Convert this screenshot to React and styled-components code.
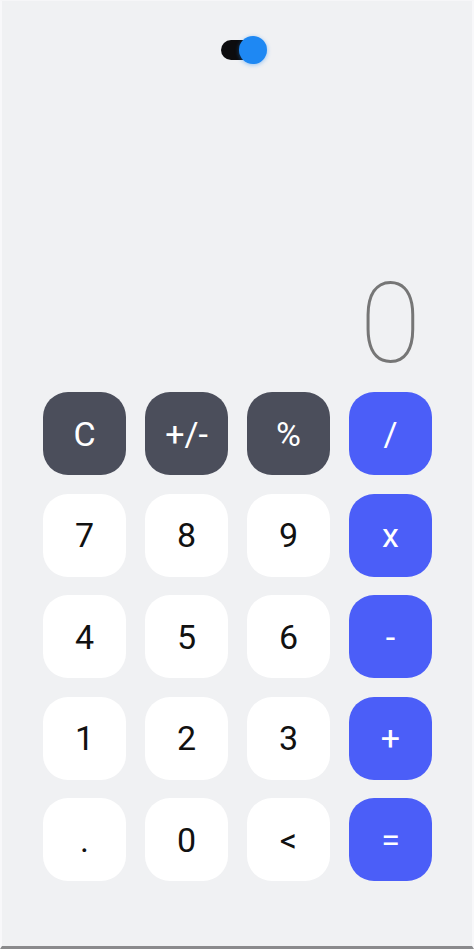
import React, { useState } from "react";
import styled, { createGlobalStyle } from "styled-components";

const GlobalStyle = createGlobalStyle`
  html, body {
    margin: 0;
    padding: 0;
    background: #f0f1f3;
    font-family: Roboto, "Liberation Sans", sans-serif;
  }
`;

const Screen = styled.div`
  box-sizing: border-box;
  width: 474px;
  height: 949px;
  background: #f0f1f3;
  border-left: 2px solid #f8f8fa;
  border-right: 2px solid #f8f8fa;
  border-top: 1px solid #f6f6f8;
  border-bottom: 3px solid #8a8a8c;
  display: flex;
  flex-direction: column;
`;

const ToggleRow = styled.div`
  display: flex;
  justify-content: center;
  padding: 34px 0 0 0;
`;

const Track = styled.button`
  position: relative;
  width: 32px;
  height: 20px;
  margin: 5px 0;
  padding: 0;
  border: none;
  border-radius: 10px;
  background: #0c0c0e;
  cursor: pointer;
`;

const Knob = styled.span`
  position: absolute;
  top: -4px;
  left: ${({ $on }) => ($on ? "18px" : "-10px")};
  width: 28px;
  height: 28px;
  border-radius: 50%;
  background: #1e88f3;
  box-shadow: 0 1px 4px rgba(30, 136, 243, 0.45);
`;

const Display = styled.div`
  flex: 1;
  display: flex;
  align-items: flex-end;
  justify-content: flex-end;
  padding: 0 51px 12px 0;
  font-size: 112px;
  font-weight: 100;
  line-height: 1;
  color: #767676;
`;

const Keypad = styled.div`
  display: grid;
  grid-template-columns: repeat(4, 83px);
  grid-auto-rows: 83px;
  column-gap: 19px;
  row-gap: 18.5px;
  padding: 0 0 65px 41px;
`;

const palette = {
  fn: { bg: "#4b4e5b", fg: "#ffffff" },
  op: { bg: "#4b5ef8", fg: "#ffffff" },
  num: { bg: "#ffffff", fg: "#111111" },
};

const Key = styled.button`
  border: none;
  border-radius: 25px;
  background: ${({ $kind }) => palette[$kind].bg};
  color: ${({ $kind }) => palette[$kind].fg};
  font-family: Roboto, "Liberation Sans", sans-serif;
  font-size: 34px;
  font-weight: 400;
  display: flex;
  align-items: center;
  justify-content: center;
  padding: 0;
  cursor: pointer;
`;

const keys = [
  ["C", "fn"], ["+/-", "fn"], ["%", "fn"], ["/", "op"],
  ["7", "num"], ["8", "num"], ["9", "num"], ["x", "op"],
  ["4", "num"], ["5", "num"], ["6", "num"], ["-", "op"],
  ["1", "num"], ["2", "num"], ["3", "num"], ["+", "op"],
  [".", "num"], ["0", "num"], ["<", "num"], ["=", "op"],
];

export default function App() {
  const [dark, setDark] = useState(true);
  const [value] = useState("0");

  return (
    <>
      <GlobalStyle />
      <Screen>
        <ToggleRow>
          <Track onClick={() => setDark(!dark)}>
            <Knob $on={dark} />
          </Track>
        </ToggleRow>
        <Display>{value}</Display>
        <Keypad>
          {keys.map(([label, kind]) => (
            <Key key={label} $kind={kind}>
              {label}
            </Key>
          ))}
        </Keypad>
      </Screen>
    </>
  );
}
